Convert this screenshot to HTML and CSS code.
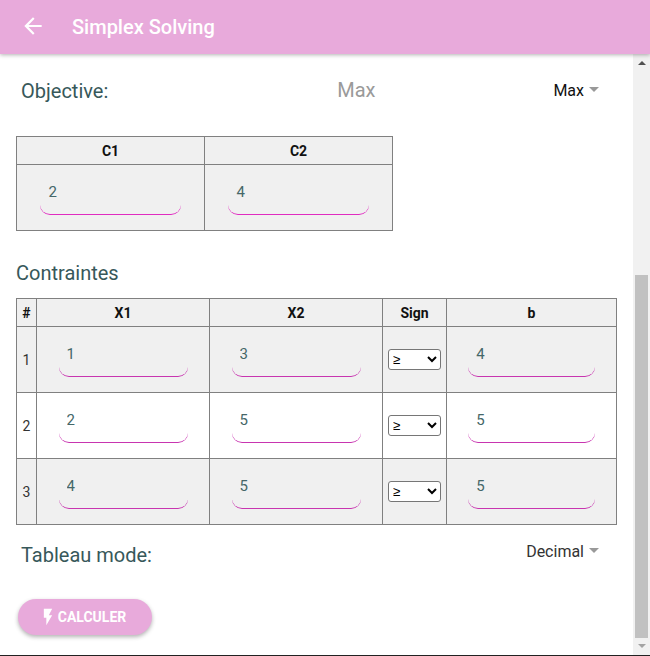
FILE: index.html
```html
<!DOCTYPE html>
<html lang="fr">
<head>
  <meta charset="UTF-8">
  <meta name="viewport" content="width=device-width, initial-scale=1.0">
  <title>Simplex Solving</title>
  <link rel="stylesheet" href="styles.css">
</head>
<body>
  <header class="toolbar">
    <svg class="back" viewBox="0 0 24 24" width="26" height="26"><path d="M20 11H7.83l5.59-5.59L12 4l-8 8 8 8 1.41-1.41L7.83 13H20v-2z"/></svg>
    <span class="title">Simplex Solving</span>
  </header>

  <div class="body-row">
    <main class="content">
      <div class="objective-row">
        <span class="label">Objective:</span>
        <span class="current">Max</span>
        <div class="dropdown"><span>Max</span><i class="caret"></i></div>
      </div>

      <table class="grid objective">
        <tr><th>C1</th><th>C2</th></tr>
        <tr class="shaded">
          <td><input class="num" value="2"></td>
          <td><input class="num" value="4"></td>
        </tr>
      </table>

      <h2 class="section">Contraintes</h2>

      <table class="grid constraints">
        <tr><th class="idx">#</th><th>X1</th><th>X2</th><th class="sign">Sign</th><th class="rhs">b</th></tr>
        <tr class="shaded">
          <td>1</td>
          <td><input class="num" value="1"></td>
          <td><input class="num" value="3"></td>
          <td><select class="sel"><option>≥</option><option>≤</option></select></td>
          <td><input class="num" value="4"></td>
        </tr>
        <tr>
          <td>2</td>
          <td><input class="num" value="2"></td>
          <td><input class="num" value="5"></td>
          <td><select class="sel"><option>≥</option><option>≤</option></select></td>
          <td><input class="num" value="5"></td>
        </tr>
        <tr class="shaded">
          <td>3</td>
          <td><input class="num" value="4"></td>
          <td><input class="num" value="5"></td>
          <td><select class="sel"><option>≥</option><option>≤</option></select></td>
          <td><input class="num" value="5"></td>
        </tr>
      </table>

      <div class="mode-row">
        <span class="label">Tableau mode:</span>
        <div class="dropdown mode"><span>Decimal</span><i class="caret"></i></div>
      </div>

      <button class="calc">
        <svg viewBox="0 0 24 24" width="20" height="20"><path d="M7 2v11h3v9l7-12h-4l4-8z"/></svg>
        <span>CALCULER</span>
      </button>
    </main>

    <div class="scrollbar">
      <i class="arrow up"></i>
      <div class="thumb"></div>
      <i class="arrow down"></i>
    </div>
  </div>
  <div class="edge"></div>
</body>
</html>
```

FILE: styles.css
```css
* {
  box-sizing: border-box;
}
html, body {
  height: 100%;
}
body {
  margin: 0;
  font-family: Roboto, sans-serif;
  background: white;
  display: flex;
  flex-direction: column;
  overflow: hidden;
}
.toolbar {
  height: 54px;
  flex: none;
  display: flex;
  align-items: center;
  padding-left: 20px;
  background: #e8aadb;
  box-shadow: 0 1px 4px rgba(0, 0, 0, 0.3);
  position: relative;
  z-index: 2;
}
.back {
  fill: white;
  margin-bottom: 2px;
}
.title {
  margin-left: 26px;
  color: white;
  font-size: 20px;
  font-weight: 500;
}
.body-row {
  flex: 1;
  display: flex;
  min-height: 0;
}
.edge {
  height: 1px;
  flex: none;
  background: #222;
}
.content {
  flex: 1;
  padding: 0 16px;
}
.objective-row {
  display: flex;
  align-items: center;
  height: 82px;
  padding: 0 0 9px 5px;
}
.label {
  font-size: 20px;
  color: #37585a;
}
.current {
  margin-left: 229px;
  margin-bottom: 2px;
  font-size: 20px;
  color: #9a9a9a;
}
.dropdown {
  margin-left: auto;
  margin-right: 18px;
  display: flex;
  align-items: center;
  font-size: 16px;
  color: #111;
}
.dropdown.mode {
  margin-bottom: 8px;
  color: #333;
}
.caret {
  margin-left: 5px;
  margin-bottom: 2px;
  border-left: 5px solid transparent;
  border-right: 5px solid transparent;
  border-top: 5px solid #999;
}
.grid {
  border-collapse: collapse;
  table-layout: fixed;
  background: white;
}
.grid th, .grid td {
  border: 1px solid #808080;
  text-align: center;
  padding: 0;
}
.grid th {
  height: 28px;
  background: #f0f0f0;
  font-size: 14px;
  font-weight: 700;
  color: #111;
}
.grid td {
  height: 66px;
  font-size: 14px;
  color: #333;
}
.shaded td {
  background: #f0f0f0;
}
.objective {
  width: 377px;
}
.constraints {
  width: 601px;
}
.idx {
  width: 20px;
}
.sign {
  width: 64px;
}
.rhs {
  width: 170px;
}
.num {
  display: block;
  width: 75%;
  height: 40px;
  margin: 0 auto 5px;
  padding: 0 8px 6px;
  border: none;
  border-bottom: 1px solid #c835b0;
  border-radius: 0 0 10px 10px;
  background: transparent;
  font-family: Roboto, sans-serif;
  font-size: 15px;
  color: #456768;
  outline: none;
}
.objective .num {
  border-bottom-color: #e02cc0;
}
.sel {
  width: 53px;
  height: 21px;
  border: 1px solid #767676;
  border-radius: 3px;
  background: white;
  font-family: "Liberation Sans", sans-serif;
  font-size: 13.33px;
}
.section {
  margin: 30px 0 13px;
  font-size: 20px;
  font-weight: 400;
  line-height: 24px;
  color: #37585a;
}
.mode-row {
  display: flex;
  align-items: center;
  height: 60px;
  padding-left: 5px;
}
.calc {
  display: flex;
  align-items: center;
  justify-content: center;
  width: 134px;
  height: 36px;
  margin: 14px 0 0 2px;
  padding: 0 6px 0 0;
  border: none;
  border-radius: 18px;
  background: #e8aadb;
  box-shadow: 0 2px 4px rgba(0, 0, 0, 0.3);
  color: white;
  font-family: Roboto, sans-serif;
  font-size: 14px;
  font-weight: 700;
}
.calc svg {
  fill: white;
}
.scrollbar {
  width: 17px;
  flex: none;
  background: #f1f1f1;
  display: flex;
  flex-direction: column;
  align-items: center;
}
.thumb {
  width: 13px;
  height: 363px;
  margin-top: auto;
  background: #c1c1c1;
}
.arrow {
  border-left: 4px solid transparent;
  border-right: 4px solid transparent;
}
.arrow.up {
  margin-top: 7px;
  border-bottom: 4px solid #505050;
}
.arrow.down {
  margin: 6px 0 7px;
  border-top: 4px solid #a3a3a3;
}
```
